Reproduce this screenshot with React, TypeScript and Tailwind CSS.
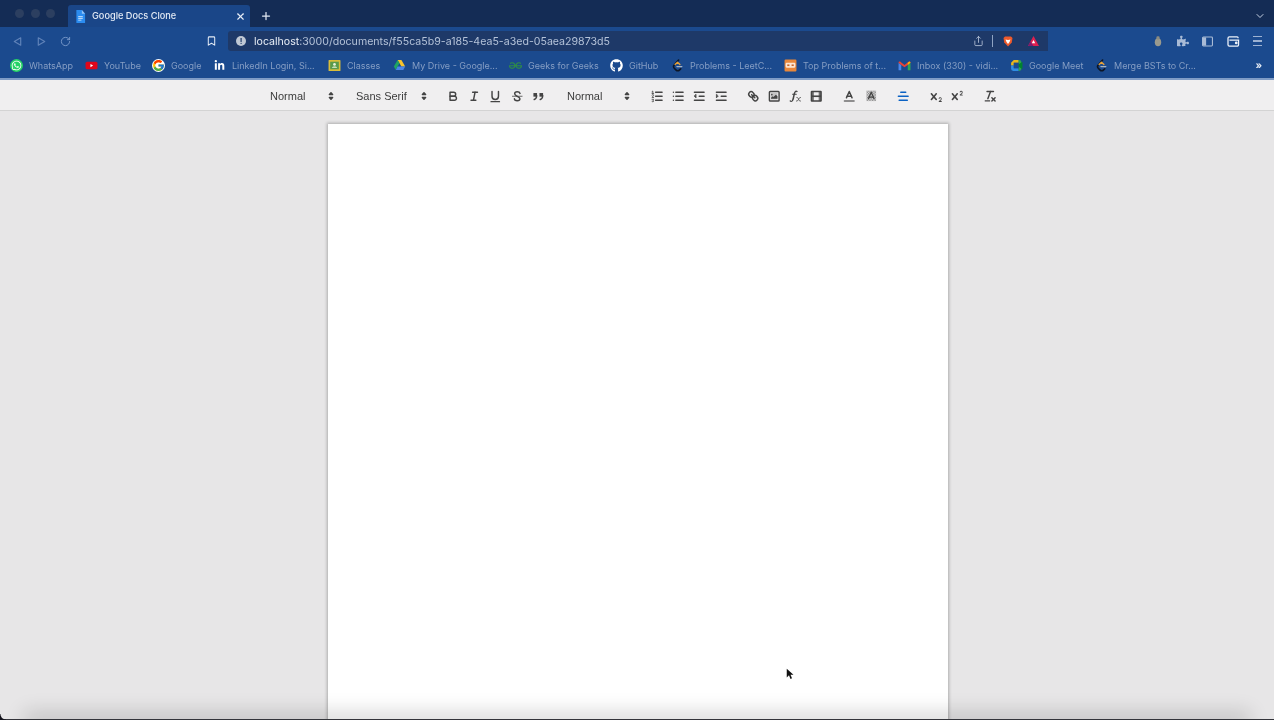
import { Bookmark, ChevronDown, Plus, RotateCw, Share, X } from "lucide-react";
import { FaGithub, FaLinkedinIn, FaPuzzlePiece, FaWhatsapp } from "react-icons/fa";
import { FcGoogle } from "react-icons/fc";
import { SiGeeksforgeeks } from "react-icons/si";
import type { ReactNode } from "react";

const Drive = () => (
  <svg viewBox="0 0 24 24" className="w-[13px] h-[13px]">
    <path d="M8.5 2h7l7 12h-7z" fill="#f6c32c" />
    <path d="M8.5 2 1.5 14l3.5 6 7-12z" fill="#1fa463" />
    <path d="M5 20.5h14l3.5-6.5H8.5z" fill="#4a86e8" />
  </svg>
);

const Gmail = () => (
  <svg viewBox="0 0 24 18" className="w-[13px] h-[10px]">
    <path d="M1 17V3l5 4v10z" fill="#4a86e8" />
    <path d="M23 17V3l-5 4v10z" fill="#34a853" />
    <path d="M1 3c0-2 2-3 4-1.5L12 7l7-5.5c2-1.5 4-.5 4 1.5l-5 4-6 4.5L6 7z" fill="#ea4335" />
    <path d="M18 7l5-4c0-1-.5-2-1.5-2.3L18 3z" fill="#fbbc04" />
  </svg>
);

const Meet = () => (
  <svg viewBox="0 0 24 24" className="w-[13px] h-[13px]">
    <path d="M2 7 7 2h9v5H7v5H2z" fill="#e9b71d" />
    <path d="M2 12h5v5h9v5H6a4 4 0 0 1-4-4z" fill="#2f8de4" />
    <path d="M16 2h1a4 4 0 0 1 4 4v12a4 4 0 0 1-4 4h-1V7z" fill="#2da44e" />
    <path d="M7 7h9v10H7z" fill="#1a4a8f" />
    <path d="M16 9.5 23 5v14l-7-4.5z" fill="#00832d" />
  </svg>
);

const LeetIcon = () => (
  <svg viewBox="0 0 24 24" className="w-[13px] h-[13px] fill-none" strokeLinecap="round" strokeLinejoin="round">
    <path d="M14 2 6 11a4.5 4.5 0 0 0 0 6l3 3a5 5 0 0 0 7 0l2-2" stroke="#0c1526" strokeWidth="3" />
    <path d="M7.5 10l4.5-4 4.500 4" stroke="#e8a33a" strokeWidth="2.5" />
    <path d="M11 14h9" stroke="#aab4c2" strokeWidth="2.5" />
  </svg>
);

const bookmarks: { label: string; width: string; icon: ReactNode }[] = [
  { label: "WhatsApp", width: "w-[44px]", icon: <FaWhatsapp className="w-[13px] h-[13px] text-white bg-[#25d366] rounded-full p-[1px]" /> },
  {
    label: "YouTube",
    width: "w-[36px]",
    icon: (
      <svg viewBox="0 0 24 24" className="w-[13px] h-[13px]">
        <rect x="1" y="5" width="22" height="14" rx="3" fill="#e0061a" />
        <path d="m10 9 5 3-5 3z" fill="#fff" />
      </svg>
    ),
  },
  { label: "Google", width: "w-[30px]", icon: <FcGoogle className="w-[13px] h-[13px] bg-white rounded-full" /> },
  { label: "LinkedIn Login, Si...", width: "w-[84px]", icon: <FaLinkedinIn className="w-[13px] h-[11px] text-white" /> },
  {
    label: "Classes",
    width: "w-[34px]",
    icon: (
      <svg viewBox="0 0 24 24" className="w-[13px] h-[13px]">
        <rect x="1" y="2" width="22" height="20" rx="1" fill="#d9bd3a" />
        <rect x="4" y="5" width="16" height="14" fill="#5a9a4c" />
        <circle cx="12" cy="10" r="2.5" fill="#e9f3da" />
        <path d="M7 16c1-3 9-3 10 0z" fill="#e9f3da" />
      </svg>
    ),
  },
  { label: "My Drive - Google...", width: "w-[85px]", icon: <Drive /> },
  { label: "Geeks for Geeks", width: "w-[70px]", icon: <SiGeeksforgeeks className="w-[13px] h-[13px] text-[#2f8d46]" /> },
  { label: "GitHub", width: "w-[30px]", icon: <FaGithub className="w-[13px] h-[13px] text-white" /> },
  { label: "Problems - LeetC...", width: "w-[82px]", icon: <LeetIcon /> },
  {
    label: "Top Problems of t...",
    width: "w-[83px]",
    icon: (
      <svg viewBox="0 0 24 24" className="w-[13px] h-[13px]">
        <rect x="1" y="1" width="22" height="22" rx="2" fill="#e8873a" />
        <rect x="3" y="7" width="18" height="9" rx="2" fill="#fbe6d4" />
        <rect x="6" y="10" width="4" height="3" fill="#c8662a" />
        <rect x="14" y="10" width="4" height="3" fill="#c8662a" />
      </svg>
    ),
  },
  { label: "Inbox (330) - vidi...", width: "w-[81px]", icon: <Gmail /> },
  { label: "Google Meet", width: "w-[54px]", icon: <Meet /> },
  { label: "Merge BSTs to Cr...", width: "w-[81px]", icon: <LeetIcon /> },
];

// quill snow toolbar icons
const Ico = ({ children }: { children: ReactNode }) => (
  <button className="flex items-center justify-center w-[21.3px] h-[18px]">
    <svg
      viewBox="0 0 18 18"
      className="w-[14.5px] h-[14.5px] text-[#444] fill-none stroke-current stroke-[1.8]"
      strokeLinecap="round"
      strokeLinejoin="round"
    >
      {children}
    </svg>
  </button>
);

const F = { fill: "currentColor", stroke: "none" };
const thin = { strokeWidth: 1 };

const xMark =
  "M9.65,5.241a1,1,0,0,0-1.409.108L6,7.964,3.759,5.349A1,1,0,0,0,2.192,6.59178Q2.21,6.6,2.241,6.651L4.684,9.5,2.241,12.35A1,1,0,0,0,3.759,13.651L6,11.036l2.241,2.615a1,1,0,0,0,1.59-1.21L7.316,9.5,9.759,6.651A1,1,0,0,0,9.65,5.241Z";

const Picker = ({ label, width }: { label: string; width: string }) => (
  <div className={`flex items-center justify-between pl-[4px] pr-[1px] h-[18px] ${width}`}>
    <span className="text-[11px] font-medium text-[#3c3c3c] font-['Liberation_Sans',Arial,sans-serif]">{label}</span>
    <svg viewBox="0 0 18 18" className="w-[14px] h-[14px] text-[#444] fill-none stroke-current stroke-2" strokeLinejoin="round">
      <polygon points="7 11 9 13 11 11 7 11" />
      <polygon points="7 7 9 5 11 7 7 7" />
    </svg>
  </div>
);

function Toolbar() {
  return (
    <div className="flex items-center h-[31px] pt-[2px] pl-[266px] bg-[#f0eff0] border-b border-[#d3d3d3] shrink-0 blur-[0.3px]">
      <Picker label="Normal" width="w-[73px]" />
      <div className="w-[13px]" />
      <Picker label="Sans Serif" width="w-[80px]" />
      <div className="flex ml-[10.5px] mr-[14px]">
        <Ico>
          <path d="M5,4H9.5A2.5,2.5,0,0,1,12,6.5v0A2.5,2.5,0,0,1,9.5,9H5A0,0,0,0,1,5,9V4A0,0,0,0,1,5,4Z" />
          <path d="M5,9h5.5A2.5,2.5,0,0,1,13,11.5v0A2.5,2.5,0,0,1,10.5,14H5a0,0,0,0,1,0,0V9A0,0,0,0,1,5,9Z" />
        </Ico>
        <Ico>
          <line x1="7" x2="13" y1="4" y2="4" />
          <line x1="5" x2="11" y1="14" y2="14" />
          <line x1="8" x2="10" y1="14" y2="4" />
        </Ico>
        <Ico>
          <path d="M5,3V9a4,4,0,0,0,4,4H9a4,4,0,0,0,4-4V3" />
          <rect {...F} x="3" y="15" width="12" height="1.5" rx="0.5" />
        </Ico>
        <Ico>
          <line x1="3" x2="15" y1="9" y2="9" style={thin} />
          <path d="M12.5,5.5C12,4 10.5,3.5 9,3.5 7,3.5 5.8,4.5 5.8,6 5.8,7.5 7.5,8.2 9,9 10.5,9.7 12.3,10.5 12.3,12 12.3,13.5 11,14.5 9,14.5 7,14.5 5.5,13.5 5.5,12" />
        </Ico>
        <Ico>
          <rect {...F} x="3" y="5" width="4.5" height="4.5" />
          <rect {...F} x="10.5" y="5" width="4.5" height="4.5" />
          <path d="M7,8c0,4.031-3,5-3,5" />
          <path d="M14.5,8c0,4.031-3,5-3,5" />
        </Ico>
      </div>
      <Picker label="Normal" width="w-[72px]" />
      <div className="flex ml-[11.5px] mr-[10.5px]">
        <Ico>
          <line x1="7" x2="15" y1="4" y2="4" />
          <line x1="7" x2="15" y1="9" y2="9" />
          <line x1="7" x2="15" y1="14" y2="14" />
          <path d="M2.5,5.5h2M3.5,5.5V2.5L2.5,3.2" style={thin} />
          <path d="M4.5,10.5h-2l2-2.5a.8.8,0,0,0-2-.3" style={thin} />
          <path d="M2.5,12.8h2l-1,1.2a1,1,0,1,1-1,1.3" style={thin} />
        </Ico>
        <Ico>
          <line x1="6" x2="15" y1="4" y2="4" />
          <line x1="6" x2="15" y1="9" y2="9" />
          <line x1="6" x2="15" y1="14" y2="14" />
          <line x1="3" x2="3" y1="4" y2="4" />
          <line x1="3" x2="3" y1="9" y2="9" />
          <line x1="3" x2="3" y1="14" y2="14" />
        </Ico>
        <Ico>
          <line x1="3" x2="15" y1="14" y2="14" />
          <line x1="3" x2="15" y1="4" y2="4" />
          <line x1="9" x2="15" y1="9" y2="9" />
          <polygon points="5 7 5 11 3 9" fill="currentColor" strokeWidth="1" />
        </Ico>
        <Ico>
          <line x1="3" x2="15" y1="14" y2="14" />
          <line x1="3" x2="15" y1="4" y2="4" />
          <line x1="9" x2="15" y1="9" y2="9" />
          <polygon points="3 7 3 11 5 9" fill="currentColor" strokeWidth="1" />
        </Ico>
      </div>
      <div className="flex mr-[11.5px]">
        <Ico>
          <line x1="7" x2="11" y1="7" y2="11" />
          <path d="M8.9,4.577a3.476,3.476,0,0,1,.36,4.679A3.476,3.476,0,0,1,4.577,8.9C3.185,7.5,2.035,6.4,4.217,4.217S7.5,3.185,8.9,4.577Z" />
          <path d="M13.423,9.1a3.476,3.476,0,0,0-4.679-.36,3.476,3.476,0,0,0,.36,4.679c1.392,1.392,2.5,2.542,4.679.36S14.815,10.5,13.423,9.1Z" />
        </Ico>
        <Ico>
          <rect x="3" y="3" width="12" height="12" rx="1" />
          <rect {...F} x="5" y="5" width="8" height="8" opacity="0.25" />
          <polygon {...F} points="5 12 5 11 7 9 8 10 11 7 13 9 13 12" />
          <circle {...F} cx="6" cy="7" r="1" />
        </Ico>
        <Ico>
          <path {...F} d="M11.759,2.482a2.561,2.561,0,0,0-3.53.607A7.656,7.656,0,0,0,6.8,6.2C6.109,9.188,5.275,14.677,4.15,14.927a1.545,1.545,0,0,0-1.3-.933A0.922,0.922,0,0,0,2,15.036S1.954,16,4.119,16s3.091-2.691,3.7-5.553c0.177-.826.36-1.726,0.554-2.6L8.775,6.2c0.381-1.421.807-2.521,1.306-2.676a1.014,1.014,0,0,0,1.02.56A0.966,0.966,0,0,0,11.759,2.482Z" />
          <rect {...F} x="5" y="6" width="6" height="1" rx="0.5" />
          <path d="M11,10.5c1,0 1.5,.5 2,2s1,2.5 2.5,2.5M15.5,10.5c-1.5,0-2,1.5-2.5,2.5s-1,2-2.5,2" style={thin} />
        </Ico>
        <Ico>
          <rect x="3" y="3" width="12" height="12" rx="0.5" />
          <rect {...F} x="3" y="3" width="3" height="12" opacity="0.75" />
          <rect {...F} x="12" y="3" width="3" height="12" opacity="0.75" />
          <rect {...F} x="3" y="8" width="12" height="2" />
        </Ico>
      </div>
      <div className="flex mr-[11.5px]">
        <Ico>
          <line x1="3" x2="15" y1="15" y2="15" style={{ stroke: "#6f6f6f" }} />
          <polyline points="5.5 11 9 3 12.5 11" />
          <line x1="11.63" x2="6.38" y1="9" y2="9" />
        </Ico>
        <Ico>
          <defs>
            <pattern id="hatch" width="2" height="2" patternUnits="userSpaceOnUse">
              <rect width="1" height="1" fill="#777" stroke="none" />
              <rect x="1" y="1" width="1" height="1" fill="#777" stroke="none" />
            </pattern>
          </defs>
          <rect x="3" y="2" width="12" height="13" fill="url(#hatch)" stroke="none" />
          <polyline points="5.5 12 9 4 12.5 12" strokeWidth="1.6" />
          <line x1="11.63" x2="6.38" y1="10" y2="10" strokeWidth="1.6" />
        </Ico>
      </div>
      <div className="flex mr-[11.5px]">
        <button className="flex items-center justify-center w-[21.3px] h-[18px]">
          <svg viewBox="0 0 18 18" className="w-[14.5px] h-[14.5px] text-[#0b62c4] fill-none stroke-current stroke-2" strokeLinecap="round">
            <line x1="15" x2="3" y1="9" y2="9" />
            <line x1="14" x2="4" y1="14" y2="14" />
            <line x1="12" x2="6" y1="4" y2="4" />
          </svg>
        </button>
      </div>
      <div className="flex mr-[11.5px]">
        <Ico>
          <path {...F} d="M15.5,15H13.861a3.858,3.858,0,0,0,1.914-2.975,1.8,1.8,0,0,0-1.6-1.751A1.921,1.921,0,0,0,12.021,11.7a0.5,0.5,0,1,0,.957.291h0a0.914,0.914,0,0,1,1.053-.725,0.81,0.81,0,0,1,.744.762c0,1.076-1.17,1.87-1.94,2.431A1.456,1.456,0,0,0,12,15.5a0.5,0.5,0,0,0,.5.5h3A0.5,0.5,0,0,0,15.5,15Z" />
          <path {...F} d={xMark} />
        </Ico>
        <Ico>
          <path {...F} d="M15.5,7H13.861a4.015,4.015,0,0,0,1.914-2.975,1.8,1.8,0,0,0-1.6-1.751A1.922,1.922,0,0,0,12.021,3.7a0.5,0.5,0,1,0,.957.291,0.917,0.917,0,0,1,1.053-.725,0.81,0.81,0,0,1,.744.762c0,1.077-1.164,1.925-1.934,2.486A1.423,1.423,0,0,0,12,7.5a0.5,0.5,0,0,0,.5.5h3A0.5,0.5,0,0,0,15.5,7Z" />
          <path {...F} d={xMark} />
        </Ico>
      </div>
      <Ico>
        <line x1="5" x2="13" y1="3" y2="3" />
        <line x1="6" x2="9.35" y1="12" y2="3" />
        <line x1="11" x2="15" y1="11" y2="15" />
        <line x1="15" x2="11" y1="11" y2="15" />
        <rect {...F} x="2" y="14" width="7" height="1.5" rx="0.5" />
      </Ico>
    </div>
  );
}

function BrowserChrome() {
  return (
    <div className="shrink-0 font-['Inter',sans-serif] blur-[0.3px]">
      {/* tab strip */}
      <div className="flex items-end h-[27px] bg-[#142c55] pl-[15px] pr-[8px]">
        <div className="flex gap-[6.5px] self-center w-[53px]">
          <span className="w-[9px] h-[9px] rounded-full bg-[#2c3f60]" />
          <span className="w-[9px] h-[9px] rounded-full bg-[#2c3f60]" />
          <span className="w-[9px] h-[9px] rounded-full bg-[#2c3f60]" />
        </div>
        <div className="flex items-center w-[182px] h-[22px] bg-[#1a4688] rounded-t-[3px] pl-[7px] pr-[4px]">
          <svg viewBox="0 0 24 24" className="w-[11px] h-[13px] shrink-0" preserveAspectRatio="none">
            <path d="M3 0h12l7 7v17H3z" fill="#2b8cf0" />
            <path d="M15 0l7 7h-7z" fill="#8fc2f7" />
            <path d="M7 11h10v1.5H7zM7 14.5h10V16H7zM7 18h7v1.5H7z" fill="#dcebfc" />
          </svg>
          <span className="ml-[6px] flex-1 text-[9.2px] font-medium text-[#e4ebf5] whitespace-nowrap">Google Docs Clone</span>
          <X className="w-[11px] h-[11px] text-[#e8eef7]" strokeWidth={2.5} />
        </div>
        <Plus className="ml-[10px] mb-[5px] w-[12px] h-[12px] text-[#e0e7f2]" strokeWidth={2.5} />
        <ChevronDown className="ml-auto mb-[5px] w-[12px] h-[12px] text-[#c5d0e2]" />
      </div>
      {/* address row */}
      <div className="flex items-center h-[26px] pt-[2px] bg-[#1b4a8e] pl-[12px]">
        <svg viewBox="0 0 12 12" className="w-[11px] h-[11px] text-[#5f82b8] fill-none stroke-current" strokeWidth="1.3" strokeLinejoin="round">
          <path d="M9.5 2v8L2.5 6z" />
        </svg>
        <svg viewBox="0 0 12 12" className="ml-[13px] w-[11px] h-[11px] text-[#5f82b8] fill-none stroke-current" strokeWidth="1.3" strokeLinejoin="round">
          <path d="M2.5 2v8l7-4z" />
        </svg>
        <RotateCw className="ml-[13px] w-[11px] h-[11px] text-[#7b9aca]" strokeWidth={2} />
        <Bookmark className="ml-[135px] w-[11px] h-[12px] text-[#e5ecf6]" strokeWidth={2.2} />
        <div className="flex items-center ml-[11px] w-[820px] h-[20px] bg-[#1e3968] rounded-l-[3px] pl-[8px] pr-[8px]">
          <span className="flex items-center justify-center w-[10px] h-[10px] rounded-full bg-[#c0c8d4] text-[8px] font-bold text-[#1e3968]">!</span>
          <span className="ml-[8px] pt-[1px] text-[10.6px] text-[#b4c2d8] whitespace-nowrap">
            <span className="text-[#e9eef6]">localhost</span>:3000/documents/f55ca5b9-a185-4ea5-a3ed-05aea29873d5
          </span>
          <Share className="ml-auto w-[11px] h-[12px] text-[#b8c5da]" strokeWidth={1.8} />
          <span className="ml-[8px] w-[1px] h-[12px] bg-[#8fa3c2]" />
          <svg viewBox="0 0 24 24" className="ml-[9px] w-[12px] h-[13px]">
            <path d="M6 2h12l3 3-1.5 9L12 22l-7.5-8L3 5z" fill="#ef5a2b" />
            <path d="M7 8l5 1 5-1-2 5-3 4-3-4z" fill="#fff" />
          </svg>
          <svg viewBox="0 0 24 24" className="ml-[13px] w-[13px] h-[12px]">
            <path d="M12 2 23 22H1z" fill="#e0204f" />
            <path d="M1 22 6 13l6 9z" fill="#7c1d6f" />
            <path d="M12 10l3.5 6.5h-7z" fill="#fff" />
          </svg>
        </div>
        <svg viewBox="0 0 10 14" className="ml-[106px] w-[8px] h-[12px]">
          <ellipse cx="5" cy="8.5" rx="4" ry="5" fill="#9a9a8e" />
          <rect x="3" y="1" width="4" height="4" rx="1.5" fill="#8b8b80" />
        </svg>
        <FaPuzzlePiece className="ml-[15px] w-[12px] h-[12px] text-[#a9bbd6]" />
        <svg viewBox="0 0 12 12" className="ml-[13px] w-[11px] h-[11px] text-[#a9bbd6]">
          <rect x="0.6" y="1.1" width="10.8" height="9.8" rx="1" fill="none" stroke="currentColor" strokeWidth="1.2" />
          <rect x="1" y="1.5" width="3.5" height="9" fill="currentColor" />
        </svg>
        <svg viewBox="0 0 14 12" className="ml-[14px] w-[13px] h-[11px] text-[#eef3fa] fill-none stroke-current" strokeWidth="1.4">
          <path d="M12 2.5V2a1 1 0 0 0-1-1H2.5a1.5 1.5 0 0 0-1.5 1.5v7A1.5 1.5 0 0 0 2.5 11H11a1.5 1.5 0 0 0 1.5-1.5V4.5H2.5" />
          <circle cx="10" cy="7.5" r="0.8" fill="currentColor" />
        </svg>
        <div className="ml-[13px] flex flex-col gap-[3px]">
          <span className="w-[9px] h-[1.5px] bg-[#9db2d2]" />
          <span className="w-[9px] h-[1.5px] bg-[#9db2d2]" />
          <span className="w-[9px] h-[1.5px] bg-[#9db2d2]" />
        </div>
      </div>
      {/* bookmarks */}
      <div className="flex items-center h-[25px] bg-[#1b4a8e] pl-[10px] gap-[12px]">
        {bookmarks.map((b) => (
          <div key={b.label} className="flex items-center gap-[6px]">
            <span className="flex items-center justify-center w-[13px] h-[13px]">{b.icon}</span>
            <span className={`${b.width} text-[9px] text-[#869ec4] whitespace-nowrap`}>{b.label}</span>
          </div>
        ))}
        <span className="ml-auto mr-[12px] text-[10px] font-bold text-[#e4ebf5]">»</span>
      </div>
      <div className="h-[2px] bg-[#7f9cc6]" />
    </div>
  );
}

export default function App() {
  return (
    <div className="relative flex flex-col w-[1274px] h-[720px] overflow-hidden bg-[#e7e6e7]">
      <BrowserChrome />
      <Toolbar />
      <main className="flex-1 flex justify-start pl-[328px] pt-[13px] overflow-hidden">
        <div className="w-[620px] h-[800px] bg-white shadow-[0_0_3px_1px_rgba(0,0,0,0.25)]" />
      </main>

      {/* mouse pointer */}
      <svg viewBox="0 0 12 16" className="absolute left-[786px] top-[667px] w-[9px] h-[14px]">
        <path d="M1 1v11.5l3-2.8 2 4.8 2-.8-2-4.7h4z" fill="#111" />
      </svg>

      {/* dock shadow at the bottom of the recording */}
      <div className="absolute left-[30px] right-[30px] bottom-[-6px] h-[6px] shadow-[0_-2px_20px_6px_rgba(0,0,0,0.16)] pointer-events-none" />
      <div className="absolute inset-x-0 bottom-0 h-[1px] bg-[#33343a]" />
      <div className="absolute left-0 bottom-0 w-[6px] h-[6px] bg-[radial-gradient(circle_at_100%_0,transparent_5px,#14141c_6px)]" />
    </div>
  );
}
